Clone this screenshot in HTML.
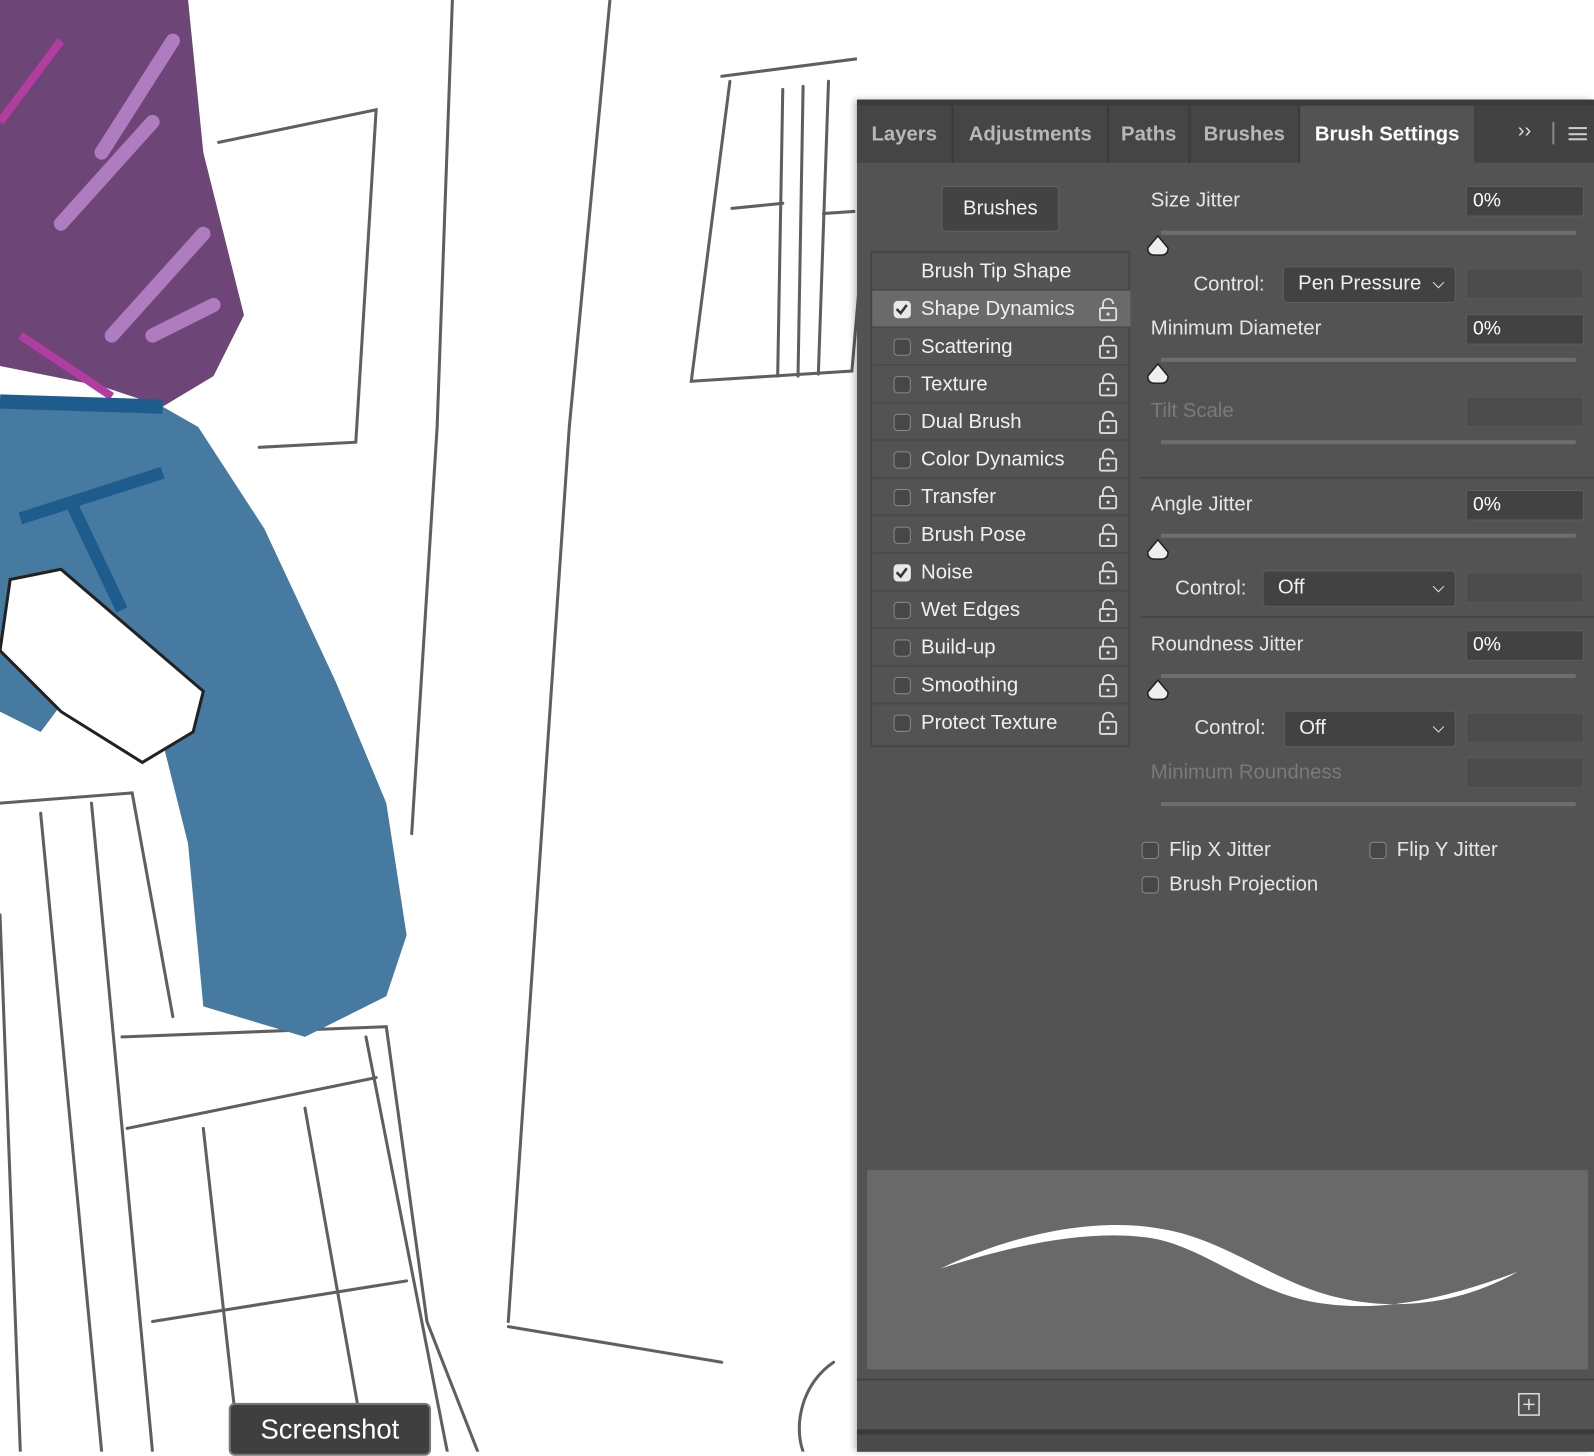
<!DOCTYPE html>
<html><head><meta charset="utf-8"><style>
*{margin:0;padding:0;box-sizing:border-box}
html,body{width:1594px;height:1452px;overflow:hidden;background:#fff}
#s{position:absolute;left:0;top:0;width:1568px;height:1428px;transform:scale(1.01658);transform-origin:0 0;font-family:"Liberation Sans",sans-serif}
.a{position:absolute}
.panel{left:843px;top:98px;width:725px;height:1330px;background:#535353;box-shadow:-3px 0 6px rgba(0,0,0,.25)}
.tab{position:absolute;top:6px;height:56px;line-height:56px;color:#b8b8b8;font-size:20px;font-weight:bold;text-align:center;background:#454545;border-right:2px solid #3a3a3a}
.row{position:absolute;left:0;width:254px;height:37px;color:#f0f0f0;font-size:20px;line-height:37px;border-bottom:2px solid #4a4a4a}
.cb{position:absolute;left:21px;top:10px;width:17px;height:17px;border:1.5px solid #888;border-radius:4px;background:#474747}
.cb.on{background:#e8e8e8;border-color:#e8e8e8}
.lock{position:absolute;left:222px;top:7px}
.lbl{position:absolute;color:#e6e6e6;font-size:20px}
.dim{color:#7a7a7a}
.inp{position:absolute;left:599px;width:116px;height:30px;background:#424242;border:1.5px solid #5e5e5e;color:#fff;font-size:19px;line-height:27px;padding-left:6px}
.inp.e{background:#4c4c4c;border-color:#595959}
.trk{position:absolute;left:299px;width:408px;height:4px;background:#6e6e6e}
.th{position:absolute;left:284px}
.sel{position:absolute;height:36px;background:#424242;border:1.5px solid #5e5e5e;border-radius:4px;color:#f0f0f0;font-size:20px;line-height:33px;padding-left:14px}
.sel:after{content:"";position:absolute;right:12px;top:11px;width:7px;height:7px;border-right:1.5px solid #ddd;border-bottom:1.5px solid #ddd;transform:rotate(45deg)}
.sep{position:absolute;left:279px;width:446px;height:2px;background:#454545}
.cb2{position:absolute;width:17px;height:17px;border:1.5px solid #888;border-radius:4px;background:#474747}
</style></head><body><div id="s">
<svg class="a" style="left:0;top:0" width="843" height="1428" viewBox="0 0 843 1428">
<g fill="none" stroke="#444" stroke-width="3" stroke-linecap="round" opacity=".85">
<path d="M445 0 L430 420 L405 820"/><path d="M600 0 L560 420 L500 1300"/><path d="M920 0 L930 90"/>
<path d="M215 140 L370 108 L350 435 L255 440"/><path d="M710 75 L865 55 L838 365 L680 375 L718 80"/>
<path d="M770 88 L765 370"/><path d="M790 85 L785 370"/><path d="M815 80 L805 368"/><path d="M720 205 L770 200"/><path d="M810 210 L840 208"/>
<path d="M500 1305 L710 1340"/><path d="M0 790 L130 780 L170 1000"/><path d="M0 900 L20 1428"/><path d="M40 800 L100 1428"/><path d="M90 790 L150 1428"/>
<path d="M120 1020 L380 1010 L420 1300 L470 1428"/><path d="M125 1110 L370 1060"/><path d="M150 1300 L400 1260"/><path d="M200 1110 L230 1380"/><path d="M300 1090 L360 1428"/><path d="M360 1020 L440 1428"/>
<path d="M820 1340 C790 1360 780 1400 790 1428"/><path d="M1305 0 L1308 50"/>
</g>
<path d="M0 0 L185 0 L200 150 L240 310 L210 370 L160 400 L100 380 L0 360 Z" fill="#6e4577"/>
<g stroke="#b07cc0" stroke-width="14" stroke-linecap="round" fill="none"><path d="M100 150 L170 40"/><path d="M60 220 L150 120"/><path d="M110 330 L200 230"/><path d="M150 330 L210 300"/></g>
<g stroke="#b23da0" stroke-width="8" fill="none"><path d="M0 120 L60 40"/><path d="M20 330 L110 390"/></g>
<path d="M0 395 L160 400 L195 420 L260 520 L330 670 L380 790 L400 920 L380 980 L300 1020 L200 990 L185 830 L160 730 L100 640 L40 720 L0 700 Z" fill="#477aa1"/>
<path d="M0 395 L160 400" stroke="#1f5c8e" stroke-width="14" fill="none"/>
<path d="M20 510 L160 465 M70 495 L120 600" stroke="#1f5c8e" stroke-width="12" fill="none"/>
<path d="M10 570 L60 560 L200 680 L190 720 L140 750 L60 700 L0 640 Z" fill="#fff" stroke="#222" stroke-width="3"/>
</svg>
<div class="a" style="left:225px;top:1380px;width:199px;height:52px;background:#3f3f3f;border:2px solid #777;border-radius:6px;color:#fff;font-size:27px;text-align:center;line-height:48px">Screenshot</div>

<div class="a panel">
 <div class="a" style="left:0;top:0;width:725px;height:6px;background:#3b3b3b"></div>
 <div class="a" style="left:0;top:6px;width:725px;height:56px;background:#424242"></div>
 <div class="tab" style="left:0;width:95px">Layers</div>
 <div class="tab" style="left:95px;width:153px">Adjustments</div>
 <div class="tab" style="left:248px;width:80px">Paths</div>
 <div class="tab" style="left:328px;width:108px">Brushes</div>
 <div class="tab" style="left:436px;width:171px;background:#535353;color:#fff;height:58px;border:none">Brush Settings</div>
 <div class="a" style="left:650px;top:20px;color:#ddd;font-size:20px">››</div>
 <div class="a" style="left:684px;top:22px;width:2px;height:22px;background:#888"></div>
 <div class="a" style="left:700px;top:27px;width:18px;height:13px;border-top:2px solid #ccc;border-bottom:2px solid #ccc"><div style="margin-top:3.5px;height:2px;background:#ccc"></div></div>

 <div class="a" style="left:83px;top:85px;width:116px;height:45px;background:#434343;border:1.5px solid #626262;border-radius:4px;color:#f0f0f0;font-size:20px;text-align:center;line-height:42px">Brushes</div>

 <div class="a" style="left:13px;top:149px;width:256px;height:488px;border:2px solid #464646;background:#535353">
  <div class="row" style="top:0;text-align:center;padding-right:10px">Brush Tip Shape</div>
  <div class="row" style="top:37px;background:#6a6a6a"><span class="cb on"><svg width="14" height="14" style="position:absolute;left:0;top:0"><path d="M2 7 L6 11 L12 3" stroke="#333" stroke-width="2.5" fill="none"/></svg></span><span style="position:absolute;left:48px">Shape Dynamics</span><svg class="lock" width="20" height="24"><path d="M5 10 V6 a5 5 0 0 1 10 0" stroke="#ddd" stroke-width="1.8" fill="none"/><rect x="2" y="10" width="16" height="12" rx="1.5" stroke="#ddd" stroke-width="1.8" fill="none"/><circle cx="10" cy="16" r="1.6" fill="#ddd"/></svg></div>
  <div class="row" style="top:74px"><span class="cb"></span><span style="position:absolute;left:48px">Scattering</span><svg class="lock" width="20" height="24"><path d="M5 10 V6 a5 5 0 0 1 10 0" stroke="#ddd" stroke-width="1.8" fill="none"/><rect x="2" y="10" width="16" height="12" rx="1.5" stroke="#ddd" stroke-width="1.8" fill="none"/><circle cx="10" cy="16" r="1.6" fill="#ddd"/></svg></div>
  <div class="row" style="top:111px"><span class="cb"></span><span style="position:absolute;left:48px">Texture</span><svg class="lock" width="20" height="24"><path d="M5 10 V6 a5 5 0 0 1 10 0" stroke="#ddd" stroke-width="1.8" fill="none"/><rect x="2" y="10" width="16" height="12" rx="1.5" stroke="#ddd" stroke-width="1.8" fill="none"/><circle cx="10" cy="16" r="1.6" fill="#ddd"/></svg></div>
  <div class="row" style="top:148px"><span class="cb"></span><span style="position:absolute;left:48px">Dual Brush</span><svg class="lock" width="20" height="24"><path d="M5 10 V6 a5 5 0 0 1 10 0" stroke="#ddd" stroke-width="1.8" fill="none"/><rect x="2" y="10" width="16" height="12" rx="1.5" stroke="#ddd" stroke-width="1.8" fill="none"/><circle cx="10" cy="16" r="1.6" fill="#ddd"/></svg></div>
  <div class="row" style="top:185px"><span class="cb"></span><span style="position:absolute;left:48px">Color Dynamics</span><svg class="lock" width="20" height="24"><path d="M5 10 V6 a5 5 0 0 1 10 0" stroke="#ddd" stroke-width="1.8" fill="none"/><rect x="2" y="10" width="16" height="12" rx="1.5" stroke="#ddd" stroke-width="1.8" fill="none"/><circle cx="10" cy="16" r="1.6" fill="#ddd"/></svg></div>
  <div class="row" style="top:222px"><span class="cb"></span><span style="position:absolute;left:48px">Transfer</span><svg class="lock" width="20" height="24"><path d="M5 10 V6 a5 5 0 0 1 10 0" stroke="#ddd" stroke-width="1.8" fill="none"/><rect x="2" y="10" width="16" height="12" rx="1.5" stroke="#ddd" stroke-width="1.8" fill="none"/><circle cx="10" cy="16" r="1.6" fill="#ddd"/></svg></div>
  <div class="row" style="top:259px"><span class="cb"></span><span style="position:absolute;left:48px">Brush Pose</span><svg class="lock" width="20" height="24"><path d="M5 10 V6 a5 5 0 0 1 10 0" stroke="#ddd" stroke-width="1.8" fill="none"/><rect x="2" y="10" width="16" height="12" rx="1.5" stroke="#ddd" stroke-width="1.8" fill="none"/><circle cx="10" cy="16" r="1.6" fill="#ddd"/></svg></div>
  <div class="row" style="top:296px"><span class="cb on"><svg width="14" height="14" style="position:absolute;left:0;top:0"><path d="M2 7 L6 11 L12 3" stroke="#333" stroke-width="2.5" fill="none"/></svg></span><span style="position:absolute;left:48px">Noise</span><svg class="lock" width="20" height="24"><path d="M5 10 V6 a5 5 0 0 1 10 0" stroke="#ddd" stroke-width="1.8" fill="none"/><rect x="2" y="10" width="16" height="12" rx="1.5" stroke="#ddd" stroke-width="1.8" fill="none"/><circle cx="10" cy="16" r="1.6" fill="#ddd"/></svg></div>
  <div class="row" style="top:333px"><span class="cb"></span><span style="position:absolute;left:48px">Wet Edges</span><svg class="lock" width="20" height="24"><path d="M5 10 V6 a5 5 0 0 1 10 0" stroke="#ddd" stroke-width="1.8" fill="none"/><rect x="2" y="10" width="16" height="12" rx="1.5" stroke="#ddd" stroke-width="1.8" fill="none"/><circle cx="10" cy="16" r="1.6" fill="#ddd"/></svg></div>
  <div class="row" style="top:370px"><span class="cb"></span><span style="position:absolute;left:48px">Build-up</span><svg class="lock" width="20" height="24"><path d="M5 10 V6 a5 5 0 0 1 10 0" stroke="#ddd" stroke-width="1.8" fill="none"/><rect x="2" y="10" width="16" height="12" rx="1.5" stroke="#ddd" stroke-width="1.8" fill="none"/><circle cx="10" cy="16" r="1.6" fill="#ddd"/></svg></div>
  <div class="row" style="top:407px"><span class="cb"></span><span style="position:absolute;left:48px">Smoothing</span><svg class="lock" width="20" height="24"><path d="M5 10 V6 a5 5 0 0 1 10 0" stroke="#ddd" stroke-width="1.8" fill="none"/><rect x="2" y="10" width="16" height="12" rx="1.5" stroke="#ddd" stroke-width="1.8" fill="none"/><circle cx="10" cy="16" r="1.6" fill="#ddd"/></svg></div>
  <div class="row" style="top:444px;border:none"><span class="cb"></span><span style="position:absolute;left:48px">Protect Texture</span><svg class="lock" width="20" height="24"><path d="M5 10 V6 a5 5 0 0 1 10 0" stroke="#ddd" stroke-width="1.8" fill="none"/><rect x="2" y="10" width="16" height="12" rx="1.5" stroke="#ddd" stroke-width="1.8" fill="none"/><circle cx="10" cy="16" r="1.6" fill="#ddd"/></svg></div>
 </div>

 <div class="lbl" style="left:289px;top:88px">Size Jitter</div>
 <div class="inp" style="top:85px">0%</div>
 <div class="trk" style="top:129px"></div>
 <svg class="th" style="top:132px" width="24" height="24"><path d="M12 2 L22 14 Q22 21 15 21 H9 Q2 21 2 14 Z" fill="#eee" stroke="#222" stroke-width="1.5"/></svg>
 <div class="lbl" style="left:331px;top:171px">Control:</div>
 <div class="sel" style="left:419px;top:164px;width:170px">Pen Pressure</div>
 <div class="inp e" style="top:166px"></div>
 <div class="lbl" style="left:289px;top:214px">Minimum Diameter</div>
 <div class="inp" style="top:211px">0%</div>
 <div class="trk" style="top:254px"></div>
 <svg class="th" style="top:258px" width="24" height="24"><path d="M12 2 L22 14 Q22 21 15 21 H9 Q2 21 2 14 Z" fill="#eee" stroke="#222" stroke-width="1.5"/></svg>
 <div class="lbl dim" style="left:289px;top:295px">Tilt Scale</div>
 <div class="inp e" style="top:292px"></div>
 <div class="trk" style="top:335px"></div>
 <div class="sep" style="top:371px"></div>
 <div class="lbl" style="left:289px;top:387px">Angle Jitter</div>
 <div class="inp" style="top:384px">0%</div>
 <div class="trk" style="top:427px"></div>
 <svg class="th" style="top:431px" width="24" height="24"><path d="M12 2 L22 14 Q22 21 15 21 H9 Q2 21 2 14 Z" fill="#eee" stroke="#222" stroke-width="1.5"/></svg>
 <div class="lbl" style="left:313px;top:470px">Control:</div>
 <div class="sel" style="left:399px;top:463px;width:190px">Off</div>
 <div class="inp e" style="top:465px"></div>
 <div class="sep" style="top:508px"></div>
 <div class="lbl" style="left:289px;top:525px">Roundness Jitter</div>
 <div class="inp" style="top:522px">0%</div>
 <div class="trk" style="top:565px"></div>
 <svg class="th" style="top:569px" width="24" height="24"><path d="M12 2 L22 14 Q22 21 15 21 H9 Q2 21 2 14 Z" fill="#eee" stroke="#222" stroke-width="1.5"/></svg>
 <div class="lbl" style="left:332px;top:607px">Control:</div>
 <div class="sel" style="left:420px;top:601px;width:169px">Off</div>
 <div class="inp e" style="top:603px"></div>
 <div class="lbl dim" style="left:289px;top:651px">Minimum Roundness</div>
 <div class="inp e" style="top:647px"></div>
 <div class="trk" style="top:691px"></div>
 <div class="cb2" style="left:280px;top:730px"></div><div class="lbl" style="left:307px;top:727px">Flip X Jitter</div>
 <div class="cb2" style="left:504px;top:730px"></div><div class="lbl" style="left:531px;top:727px">Flip Y Jitter</div>
 <div class="cb2" style="left:280px;top:764px"></div><div class="lbl" style="left:307px;top:761px">Brush Projection</div>

 <div class="a" style="left:10px;top:1053px;width:709px;height:196px;background:#696969"></div>
 <svg class="a" style="left:10px;top:1053px" width="709" height="196"><path d="M72 97 C160 55 240 48 290 58 C340 66 380 95 430 115 C480 135 560 145 640 100 C560 130 500 140 440 130 C380 120 330 75 280 67 C220 58 150 72 72 97 Z" fill="#fff"/></svg>
 <div class="a" style="left:0;top:1258px;width:725px;height:2px;background:#424242"></div>
 <svg class="a" style="left:650px;top:1272px" width="22" height="24"><rect x="1" y="1" width="20" height="21" stroke="#ddd" stroke-width="1.5" fill="none"/><path d="M11 6 V17 M5.5 11.5 H16.5" stroke="#ddd" stroke-width="1.5"/></svg>
 <div class="a" style="left:0;top:1308px;width:725px;height:5px;background:#3a3a3a"></div>
 <div class="a" style="left:0;top:1313px;width:725px;height:17px;background:#4a4a4a"></div>
</div>
</div></body></html>
